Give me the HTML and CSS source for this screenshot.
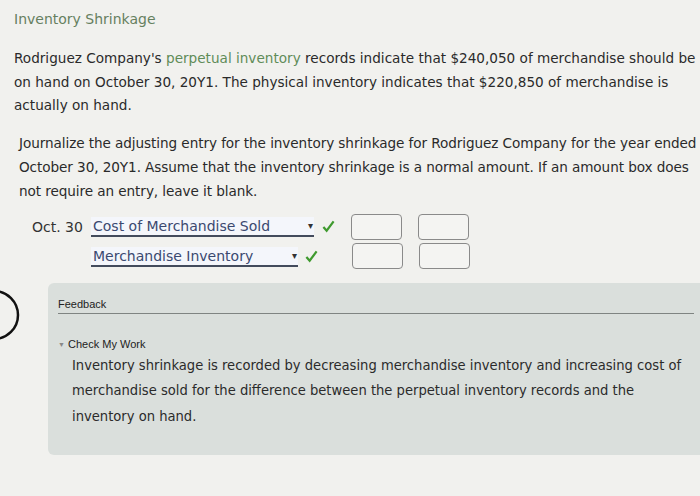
FILE: index.html
```html
<!DOCTYPE html>
<html>
<head>
<meta charset="utf-8">
<link rel="stylesheet" href="styles.css">
</head>
<body>
<div class="page">
  <h1 class="title">Inventory Shrinkage</h1>
  <p class="intro">Rodriguez Company's <span class="term">perpetual inventory</span> records indicate that $240,050 of merchandise should be on hand on October 30, 20Y1. The physical inventory indicates that $220,850 of merchandise is actually on hand.</p>
  <p class="task">Journalize the adjusting entry for the inventory shrinkage for Rodriguez Company for the year ended October 30, 20Y1. Assume that the inventory shrinkage is a normal amount. If an amount box does not require an entry, leave it blank.</p>
  <div class="journal">
    <div class="jrow">
      <span class="date">Oct. 30</span>
      <span class="select s1">Cost of Merchandise Sold<span class="arrow">&#9662;</span></span>
      <svg class="check" viewBox="0 0 14 14" width="13" height="13"><path d="M1.5 7.5 L5 11.5 L12.5 1.5" fill="none" stroke="#3f9a2e" stroke-width="2.4"/></svg>
      <span class="amt a1"></span>
      <span class="amt"></span>
    </div>
    <div class="jrow r2">
      <span class="date"></span>
      <span class="select s2">Merchandise Inventory<span class="arrow">&#9662;</span></span>
      <svg class="check" viewBox="0 0 14 14" width="13" height="13"><path d="M1.5 7.5 L5 11.5 L12.5 1.5" fill="none" stroke="#3f9a2e" stroke-width="2.4"/></svg>
      <span class="amt a2"></span>
      <span class="amt"></span>
    </div>
  </div>
  <div class="fbwrap">
    <svg class="ring" width="22" height="60" viewBox="0 0 22 60"><circle cx="-6" cy="30" r="24" fill="none" stroke="#111" stroke-width="2.5"/></svg>
    <div class="feedback">
      <div class="fbhead">Feedback</div>
      <div class="rule"></div>
      <div class="cmw"><span class="tri">&#9660;</span> Check My Work</div>
      <p class="fbtext">Inventory shrinkage is recorded by decreasing merchandise inventory and increasing cost of merchandise sold for the difference between the perpetual inventory records and the inventory on hand.</p>
    </div>
  </div>
</div>
</body>
</html>
```
FILE: styles.css
```css
html, body {
  margin: 0;
  padding: 0;
  background: #f1f1ee;
  width: 700px;
  height: 496px;
  overflow: hidden;
}
.page {
  font-family: "DejaVu Sans", Verdana, sans-serif;
  color: #2a2a2a;
  padding: 9px 0 0 14px;
}
.title {
  font-size: 14px;
  font-weight: normal;
  color: #66805f;
  margin: 0 0 18px 0;
  line-height: 20px;
}
.intro {
  font-size: 13.6px;
  line-height: 23.5px;
  margin: 0 0 13px 0;
  width: 684px;
}
.term { color: #5f8c58; }
.task {
  font-size: 13.6px;
  letter-spacing: -0.08px;
  line-height: 24px;
  margin: 0 0 10px 5px;
  width: 681px;
}
.journal { margin-left: 18px; }
.jrow {
  display: flex;
  align-items: center;
  height: 28px;
}
.r2 { height: 31px; }
.date {
  width: 59px;
  font-size: 14px;
  color: #333;
}
.select {
  position: relative;
  display: inline-block;
  font-size: 14px;
  color: #3b4970;
  background: #f4f6fb;
  border-bottom: 2px solid #434b5c;
  height: 18px;
  line-height: 18px;
  padding-left: 2px;
}
.s1 { width: 221px; }
.s2 { width: 205px; margin-top: 2px; }
.arrow {
  position: absolute;
  right: 1px;
  top: 0;
  font-size: 10px;
  color: #333;
}
.check { margin-left: 7px; }
.s1 + .check { margin-left: 8px; }
.amt {
  width: 49px;
  height: 24px;
  border: 1.5px solid #8a8a8a;
  border-radius: 4px;
  background: #f4f4f2;
  margin-left: 16px;
}
.a1 { margin-left: 16px; }
.a2 { margin-left: 34px; }
.fbwrap {
  position: relative;
  margin-top: 11px;
}
.ring {
  position: absolute;
  left: -14px;
  top: 2px;
}
.feedback {
  margin-left: 34px;
  width: 642px;
  background: #dadfdc;
  border-radius: 6px 0 0 6px;
  padding: 14px 0 18px 10px;
  height: 140px;
}
.fbhead {
  font-family: "Liberation Sans", Arial, sans-serif;
  font-size: 11px;
  color: #222;
  line-height: 14px;
}
.rule {
  margin-top: 2px;
  width: 636px;
  height: 1px;
  background: #7f8482;
}
.cmw {
  font-family: "Liberation Sans", Arial, sans-serif;
  font-size: 11px;
  color: #222;
  margin-top: 23px;
  line-height: 14px;
}
.tri { font-size: 7px; color: #888; vertical-align: 1px; }
.fbtext {
  font-family: "DejaVu Sans Condensed", "DejaVu Sans", sans-serif;
  font-size: 14.6px;
  line-height: 25.5px;
  color: #2b2b2b;
  margin: 0 0 0 14px;
  width: 620px;
}
```
